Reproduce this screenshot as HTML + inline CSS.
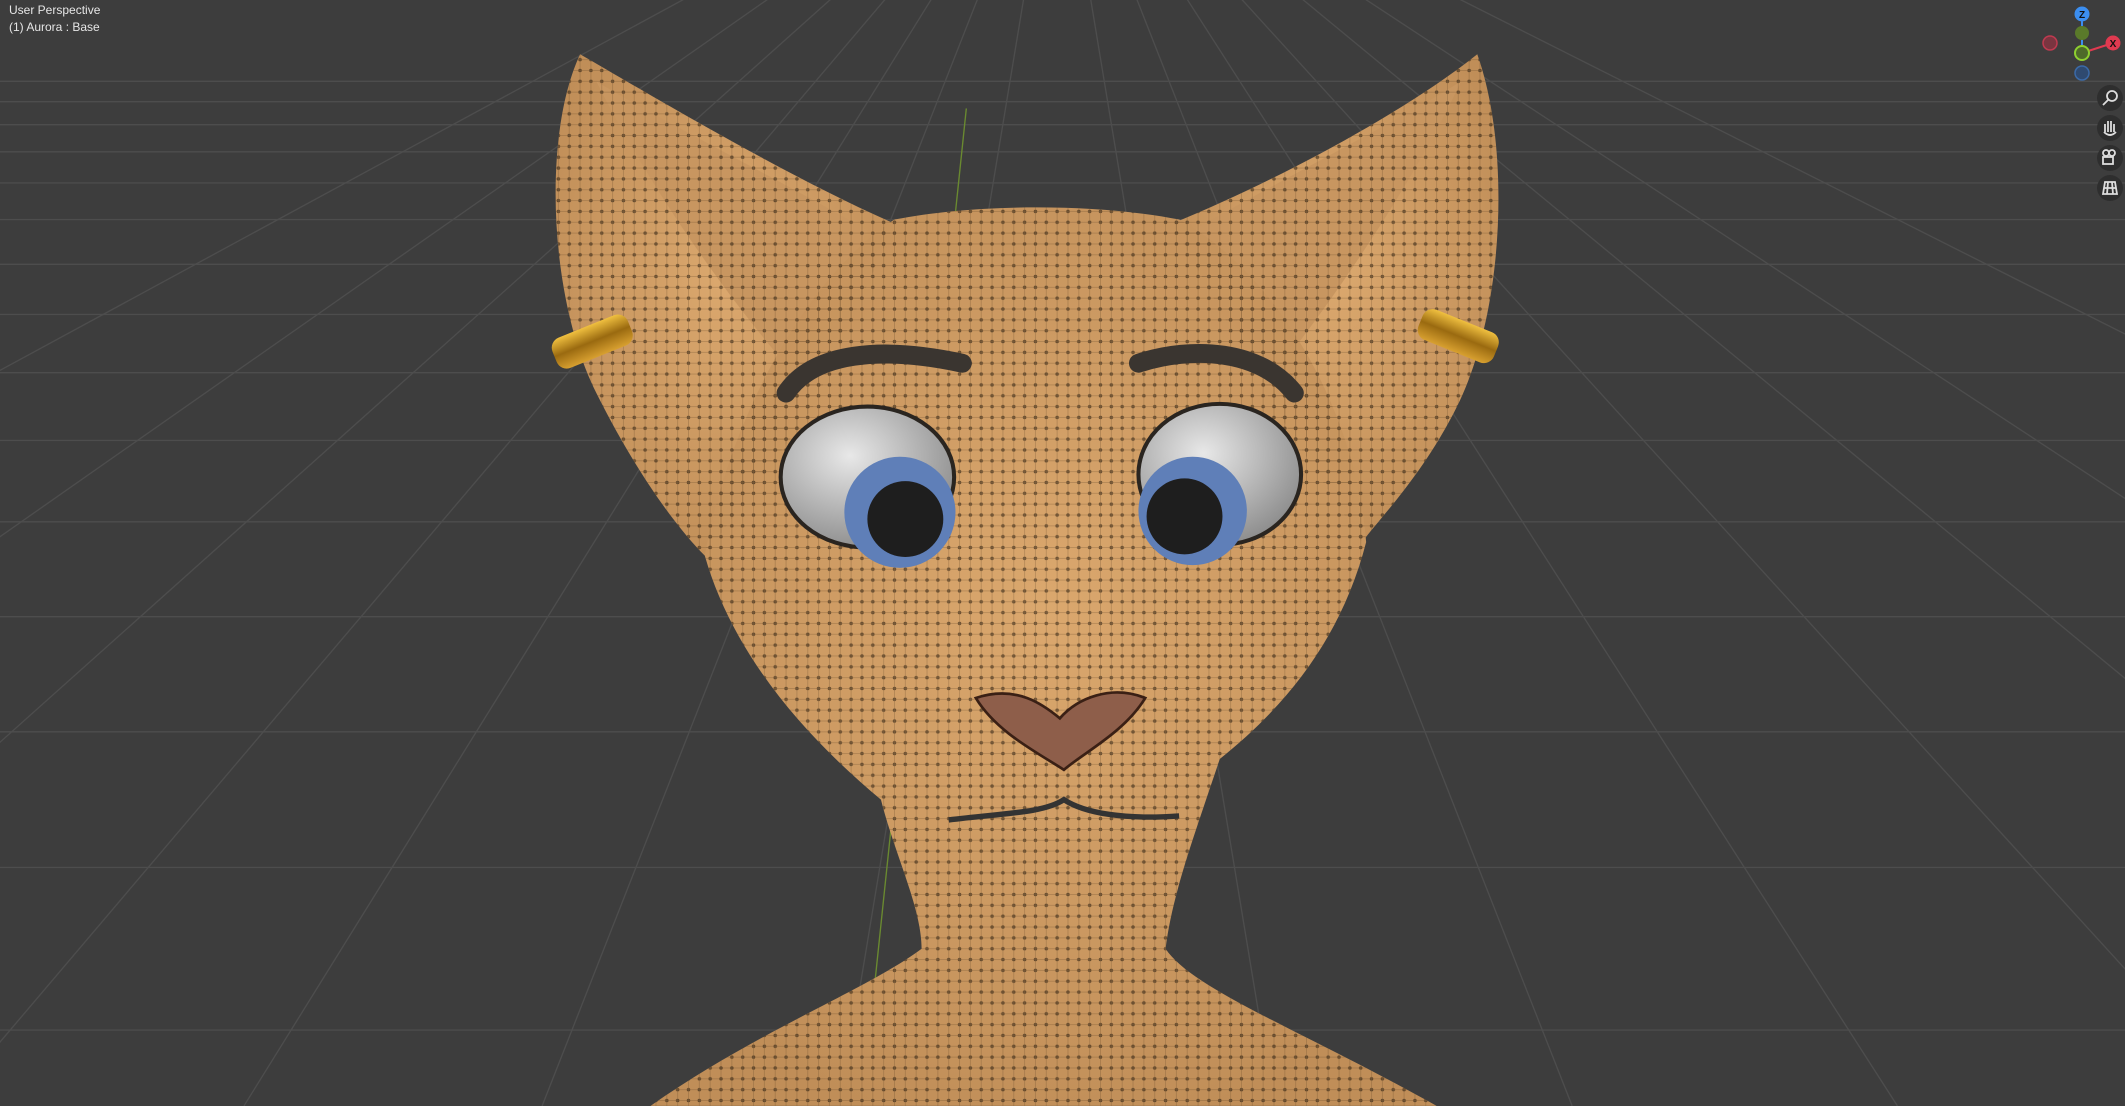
<!DOCTYPE html>
<html><head><meta charset="utf-8"><style>
html,body{margin:0;padding:0;background:#3d3d3d;overflow:hidden}
svg{display:block}
</style></head><body>
<svg width="2125" height="1106" viewBox="0 0 2125 1106" xmlns="http://www.w3.org/2000/svg">
<defs>
<radialGradient id="skin" cx="0.5" cy="0.45" r="0.6">
<stop offset="0" stop-color="#dba86e"/><stop offset="1" stop-color="#c08e58"/>
</radialGradient>
<pattern id="mesh" width="8" height="8" patternUnits="userSpaceOnUse">
<circle cx="4" cy="4" r="1.3" fill="#1a120a"/>
<path d="M0 4H8M4 0V8" stroke="#5b4024" stroke-width="0.3"/>
</pattern>
<radialGradient id="eye" cx="0.4" cy="0.35" r="0.7"><stop offset="0" stop-color="#e8e8e8"/><stop offset="1" stop-color="#8a8a8a"/></radialGradient>
<linearGradient id="gold" x1="0" y1="0" x2="0" y2="1"><stop offset="0" stop-color="#f0c040"/><stop offset="0.5" stop-color="#9a6a10"/><stop offset="1" stop-color="#d8a030"/></linearGradient>
</defs>
<rect width="2125" height="1106" fill="#3d3d3d"/>
<g transform="scale(1.3553)" stroke="#4d4d4d" stroke-width="1" fill="none">
<path d="M0 60H1568M0 75H1568M0 92H1568M0 112H1568M0 135H1568M0 162H1568M0 195H1568M0 232H1568M0 275H1568M0 325H1568M0 385H1568M0 455H1568M0 540H1568M0 640H1568M0 760H1568"/>
<path d="M780 -150L-600 816M780 -150L-300 816M780 -150L-40 816M780 -150L180 816M780 -150L400 816M780 -150L620 816M780 -150L940 816M780 -150L1160 816M780 -150L1400 816M780 -150L1660 816M780 -150L1950 816M780 -150L2250 816M780 -150L-1000 816M780 -150L2700 816"/>
<path d="M713 80L645 730" stroke="#6a8a30"/>
<path d="M428 40C400 100 405 220 440 290C470 350 500 390 520 410L600 300L660 165C580 130 480 70 428 40Z" fill="url(#skin)" stroke="none"/>
<path d="M1090 40C1115 110 1110 230 1075 300C1050 350 1020 380 1005 400L940 300L865 165C950 130 1040 80 1090 40Z" fill="url(#skin)" stroke="none"/>
<path d="M440 60C470 120 520 200 585 275L640 170C570 130 490 90 440 60Z M1078 60C1050 120 1000 200 945 270L880 170C950 130 1030 90 1078 60Z" fill="#c89660" stroke="none"/>
<path d="M520 410C540 300 600 200 660 162C720 150 810 150 870 162C940 200 1000 300 1008 400C990 470 950 520 900 560C880 620 865 660 860 700C880 730 960 760 1060 816H480C560 760 640 730 680 700C680 670 660 630 650 590C590 540 540 480 520 410Z" fill="url(#skin)" stroke="none"/>
<g opacity="0.6" stroke="none">
<path d="M428 40C400 100 405 220 440 290C470 350 500 390 520 410L600 300L660 165C580 130 480 70 428 40Z" fill="url(#mesh)"/>
<path d="M1090 40C1115 110 1110 230 1075 300C1050 350 1020 380 1005 400L940 300L865 165C950 130 1040 80 1090 40Z" fill="url(#mesh)"/>
<path d="M520 410C540 300 600 200 660 162C720 150 810 150 870 162C940 200 1000 300 1008 400C990 470 950 520 900 560C880 620 865 660 860 700C880 730 960 760 1060 816H480C560 760 640 730 680 700C680 670 660 630 650 590C590 540 540 480 520 410Z" fill="url(#mesh)"/>
</g>
<path d="M580 290C600 260 650 255 710 268" stroke="#3a3530" stroke-width="14" stroke-linecap="round"/>
<path d="M840 268C880 255 930 258 955 290" stroke="#3a3530" stroke-width="14" stroke-linecap="round"/>
<ellipse cx="640" cy="352" rx="64" ry="52" fill="url(#eye)" stroke="#2a2520" stroke-width="3"/>
<circle cx="664" cy="378" r="41" fill="#5f7fb8" stroke="none"/>
<circle cx="668" cy="383" r="28" fill="#1e1e1e" stroke="none"/>
<ellipse cx="900" cy="350" rx="60" ry="52" fill="url(#eye)" stroke="#2a2520" stroke-width="3"/>
<circle cx="880" cy="377" r="40" fill="#5f7fb8" stroke="none"/>
<circle cx="874" cy="381" r="28" fill="#1e1e1e" stroke="none"/>
<path d="M720 515C750 505 770 520 782 530C795 515 820 505 845 515C830 540 800 555 785 568C765 555 735 540 720 515Z" fill="#8e5e4a" stroke="#3a2015" stroke-width="2"/>
<path d="M700 605C740 600 770 600 785 590C800 600 830 605 870 602" stroke="#333" stroke-width="4"/>
<rect x="407" y="240" width="60" height="24" rx="8" fill="url(#gold)" stroke="none" transform="rotate(-22 437 252)"/>
<rect x="1046" y="236" width="60" height="24" rx="8" fill="url(#gold)" stroke="none" transform="rotate(22 1076 248)"/>
</g>
<text x="9" y="14" font-family="Liberation Sans, sans-serif" font-size="12" fill="#e6e6e6">User Perspective</text>
<text x="9" y="31" font-family="Liberation Sans, sans-serif" font-size="12" fill="#e6e6e6">(1) Aurora : Base</text>
<g font-family="Liberation Sans, sans-serif" font-size="10" font-weight="bold" text-anchor="middle">
<line x1="2082" y1="53" x2="2082" y2="14" stroke="#3b8ef0" stroke-width="2"/>
<line x1="2082" y1="53" x2="2113" y2="43" stroke="#e03a50" stroke-width="2"/>
<circle cx="2050" cy="43" r="7" fill="#7a3540" stroke="#c03a50" stroke-width="1.5"/>
<circle cx="2082" cy="73" r="7" fill="#2f4a70" stroke="#3b6aa8" stroke-width="1.5"/>
<circle cx="2082" cy="33" r="7" fill="#5a7a2a"/>
<circle cx="2082" cy="53" r="7" fill="#4e6a2a" stroke="#8ed030" stroke-width="2"/>
<circle cx="2082" cy="14" r="7.5" fill="#3b8ef0"/><text x="2082" y="18" fill="#111">Z</text>
<circle cx="2113" cy="43" r="7.5" fill="#e03a50"/><text x="2113" y="47" fill="#111">X</text>
<g fill="#2e2e2e"><circle cx="2110" cy="98" r="13"/><circle cx="2110" cy="128" r="13"/><circle cx="2110" cy="158" r="13"/><circle cx="2110" cy="188" r="13"/></g>
<g stroke="#ddd" stroke-width="1.8" fill="none">
<circle cx="2112" cy="96" r="5"/><path d="M2108 100L2103 105"/>
<path d="M2105 132V124M2108 132V121M2111 132V121M2114 132V124M2104 132Q2110 138 2116 132"/>
<rect x="2103" y="157" width="10" height="7"/><circle cx="2106" cy="153" r="3"/><circle cx="2112" cy="153" r="3"/>
<path d="M2103 194L2105 182H2115L2117 194ZM2104 188H2116M2108 182L2107 194M2112 182L2113 194"/>
</g>
</g>
</svg>
</body></html>
